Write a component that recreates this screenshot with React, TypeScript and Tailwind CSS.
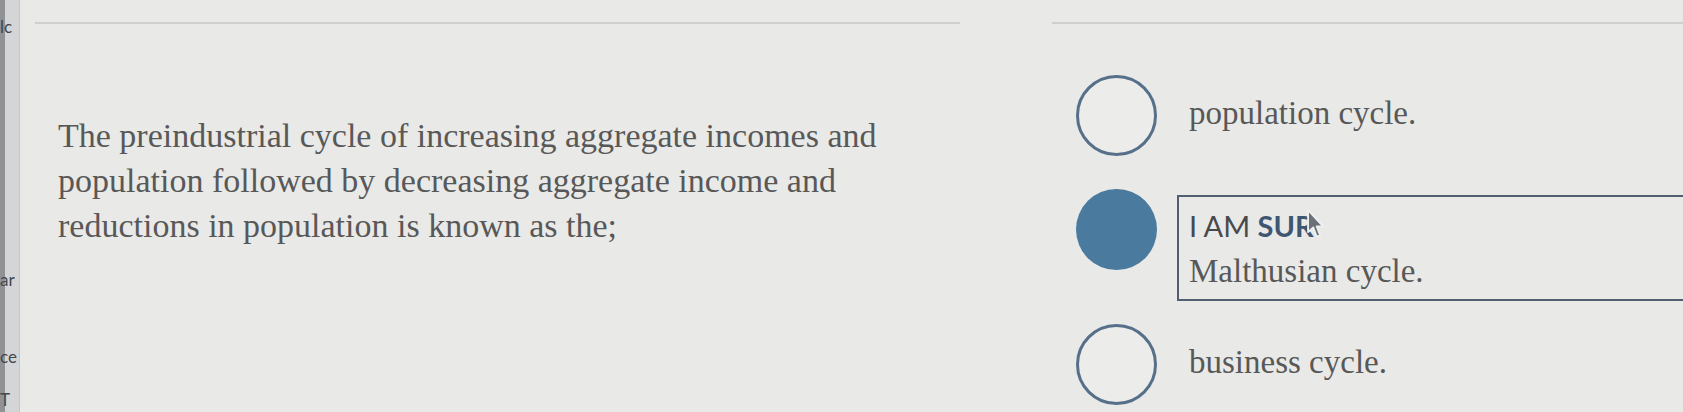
import { useState } from "react"

const options = [
    { id: "population", label: "population cycle." },
    { id: "malthusian", label: "Malthusian cycle." },
    { id: "business", label: "business cycle." },
]

function Cursor() {
    return (
        <svg
            className="absolute left-[-9px] top-[1px] w-[20px] h-[30px]"
            viewBox="0 0 16 26"
        >
            <path
                d="M2 1 L2 20 L6.5 16 L9.5 24 L12.5 22.8 L9.5 15 L15 15 Z"
                fill="#6c7178"
                stroke="#f0f0f0"
                strokeWidth="1.6"
                strokeLinejoin="round"
            />
        </svg>
    )
}

function Radio({ checked }: { checked: boolean }) {
    return (
        <div
            className={
                checked
                    ? "w-[81px] h-[81px] shrink-0 rounded-full bg-[#4a7a9e]"
                    : "w-[81px] h-[81px] shrink-0 rounded-full bg-[#ececea] border-[3px] border-[#56708a]"
            }
        />
    )
}

export default function App() {
    const [selected, setSelected] = useState("malthusian")

    return (
        <div className="w-full h-[412px] bg-[#e9e9e7] flex overflow-hidden font-['Liberation_Serif',serif] text-[#585858]">
            {/* edge of the neighbouring panel */}
            <div className="w-[20px] shrink-0 h-full bg-linear-to-r from-[#909396] from-25% to-[#d3d5d7] to-25% border-r border-r-[#c4c6c8] overflow-hidden flex flex-col font-['Lato',sans-serif] text-[17px] leading-none text-[#45474b]">
                <span className="mt-[18px] whitespace-nowrap">lc</span>
                <span className="mt-[236px] whitespace-nowrap">ar</span>
                <span className="mt-[60px] whitespace-nowrap">ce</span>
                <span className="mt-[26px] whitespace-nowrap">T</span>
            </div>

            <div className="flex-1 flex pl-[15px]">
                {/* question */}
                <div className="w-[925px] shrink-0 border-t-2 border-[#cfcfcf] mt-[22px] pt-[89px] pl-[23px]">
                    <p className="text-[34px] leading-[45px] w-[860px]">
                        The preindustrial cycle of increasing aggregate incomes and
                        population followed by decreasing aggregate income and
                        reductions in population is known as the;
                    </p>
                </div>

                {/* answers */}
                <div className="w-[660px] shrink-0 ml-[92px] border-t-2 border-[#cfcfcf] mt-[22px] pt-[51px] pl-[24px] flex flex-col">
                    {options.map((o, i) => {
                        const checked = selected === o.id
                        return (
                            <div
                                key={o.id}
                                onClick={() => setSelected(o.id)}
                                className={
                                    i === 0
                                        ? "flex items-start cursor-pointer"
                                        : i === 1
                                          ? "flex items-start cursor-pointer mt-[33px]"
                                          : "flex items-start cursor-pointer mt-[23px]"
                                }
                            >
                                <Radio checked={checked} />
                                {checked ? (
                                    <div className="ml-[20px] mt-[6px] flex-1 border-2 border-[#535d70] pl-[10px] pt-[11px] pb-[6px]">
                                        <div className="font-['Lato',sans-serif] text-[29px] leading-[36px] text-[#48494c]">
                                            I AM{" "}
                                            <span className="font-bold text-[#3f5673]">
                                                SUR
                                                <span className="relative text-transparent">
                                                    E
                                                    <Cursor />
                                                </span>
                                            </span>
                                        </div>
                                        <div className="mt-[5px] text-[33px] leading-[44px]">
                                            {o.label}
                                        </div>
                                    </div>
                                ) : (
                                    <div className="ml-[20px] pl-[12px] pt-[16px] text-[33px] leading-[44px]">
                                        {o.label}
                                    </div>
                                )}
                            </div>
                        )
                    })}
                </div>
            </div>
        </div>
    )
}
